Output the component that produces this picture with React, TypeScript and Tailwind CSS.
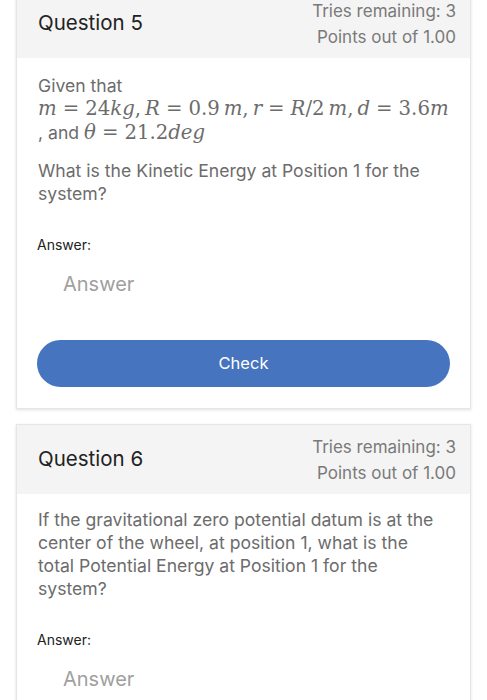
import React from "react";

const sans = { fontFamily: "Inter, 'Liberation Sans', sans-serif" };
const serif = { fontFamily: "'DejaVu Serif', 'Liberation Serif', serif" };

function V({ children }: { children: React.ReactNode }) {
  return <span className="italic">{children}</span>;
}
function Eq() {
  return <span className="mx-[6px]">=</span>;
}
function Cm() {
  return <span className="mr-[4px]">,</span>;
}

function Header({ n }: { n: number }) {
  return (
    <div className="flex items-center justify-between bg-[#f4f4f4] pl-[21px] pr-[14px] h-[69px]">
      <div className="text-[20.5px] text-[#222]">Question {n}</div>
      <div className="text-right text-[17px] leading-[26px] text-[#7a7a7a]">
        <div>Tries remaining: 3</div>
        <div>Points out of 1.00</div>
      </div>
    </div>
  );
}

function AnswerBlock() {
  return (
    <>
      <div className="mt-[32px] text-[14px] leading-[16px] text-[#222]">Answer:</div>
      <div className="mt-[19px] ml-[26px] text-[20px] leading-[24px] text-[#a0a0a0]">Answer</div>
    </>
  );
}

export default function App() {
  return (
    <div className="bg-white w-[487px] h-[700px] overflow-hidden" style={sans}>
      <div className="mt-[-12px] mx-[16px] bg-white border border-[#e6e6e6] shadow-[0_1px_3px_rgba(0,0,0,0.12)]">
        <Header n={5} />
        <div className="px-[20px] pt-[16px] pb-[21px]">
          <div className="text-[17.6px] leading-[23px] text-[#6c6c6c] pl-[1px]">
            <div>Given that</div>
            <div className="text-[19.7px] leading-[24px] text-[#6c6c6c] whitespace-nowrap" style={serif}>
              <V>m</V>
              <Eq />
              24<V>kg</V>
              <Cm />
              <V>R</V>
              <Eq />
              0.9<span className="ml-[4px]"><V>m</V></span>
              <Cm />
              <V>r</V>
              <Eq />
              <V>R</V>/2<span className="ml-[4px]"><V>m</V></span>
              <Cm />
              <V>d</V>
              <Eq />
              3.6<V>m</V>
            </div>
            <div>
              , and{" "}
              <span className="text-[19.7px]" style={serif}>
                <V>θ</V>
                <Eq />
                21.2<V>deg</V>
              </span>
            </div>
          </div>
          <div className="mt-[15px] pl-[1px] text-[17.6px] leading-[23px] text-[#6c6c6c]">
            What is the Kinetic Energy at Position 1 for the
            <br />
            system?
          </div>
          <AnswerBlock />
          <button className="mt-[44px] w-full h-[47px] rounded-full bg-[#4674bf] text-white text-[16.5px]">
            Check
          </button>
        </div>
      </div>

      <div className="mt-[15px] mx-[16px] bg-white border border-[#e6e6e6] shadow-[0_1px_3px_rgba(0,0,0,0.12)]">
        <Header n={6} />
        <div className="px-[20px] pt-[14px] pb-[20px]">
          <div className="pl-[1px] text-[17.6px] leading-[23px] text-[#6c6c6c]">
            If the gravitational zero potential datum is at the
            <br />
            center of the wheel, at position 1, what is the
            <br />
            total Potential Energy at Position 1 for the
            <br />
            system?
          </div>
          <AnswerBlock />
          <div className="h-[60px]" />
        </div>
      </div>
    </div>
  );
}
